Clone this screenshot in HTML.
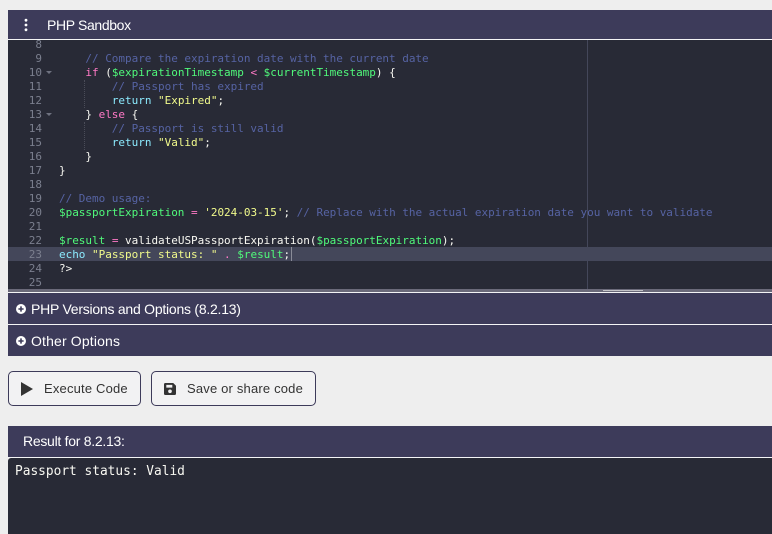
<!DOCTYPE html>
<html>
<head>
<meta charset="utf-8">
<style>
html,body{margin:0;padding:0;width:772px;height:534px;overflow:hidden;background:#eeeeee;font-family:"Liberation Sans",sans-serif}
.a{position:absolute}
.bar{position:absolute;left:8px;width:764px;background:#3d3b5a;color:#fff;font-size:14px;white-space:nowrap}
.line{position:absolute;left:8px;width:764px;height:1px;background:#f4f4f6}
#ed{position:absolute;left:8px;top:40px;width:764px;height:249px;background:#282a36;overflow:hidden}
.l{position:absolute;left:0;margin-top:1px;width:764px;height:14px;font:11px/14px "DejaVu Sans Mono",monospace;letter-spacing:-.022px;white-space:pre;color:#f8f8f2}
.n{position:absolute;right:730px;color:#7b7f8e;}
.c{position:absolute;left:51px}
.cm{color:#5663a3}
.k{color:#ff79c6}
.v{color:#50fa7b}
.s{color:#f1fa8c}
.f{color:#8be9fd}
.o{color:#ff79c6}
.btn{position:absolute;top:371px;height:33px;border:1px solid #3d3b5a;border-radius:5px;background:#f2f2f3;color:#333;font-size:13px;line-height:33px;white-space:nowrap;letter-spacing:.18px}
.fold{position:absolute;left:38px;width:0;height:0;border-left:3px solid transparent;border-right:3px solid transparent;border-top:3px solid #6f7280}
</style>
</head>
<body>
<div class="bar" style="top:10px;height:29px;line-height:30px">
  <svg class="a" style="left:16px;top:8px" width="4" height="14" viewBox="0 0 4 14"><circle cx="2" cy="2.2" r="1.4" fill="#fff"/><circle cx="2" cy="7" r="1.4" fill="#fff"/><circle cx="2" cy="11.8" r="1.4" fill="#fff"/></svg>
  <span class="a" style="left:39px;top:0;letter-spacing:-.36px">PHP Sandbox</span>
</div>
<div class="line" style="top:39px"></div>

<div id="ed">
  <div class="a" style="left:0;top:207px;width:764px;height:14px;background:#44475a"></div>
  <div class="a" style="left:579px;top:0;width:1px;height:249px;background:#44475a"></div>
  <div class="a" style="left:76px;top:40px;height:28px;border-left:1px dotted #4a4c58"></div>
  <div class="a" style="left:76px;top:82px;height:28px;border-left:1px dotted #4a4c58"></div>
  <div class="a" style="left:283px;top:207px;width:1px;height:14px;background:#8a8c98"></div>

  <div class="l" style="top:-3px"><span class="n">8</span></div>
  <div class="l" style="top:11px"><span class="n">9</span><span class="c cm">    // Compare the expiration date with the current date</span></div>
  <div class="l" style="top:25px"><span class="n">10</span><span class="c">    <span class="k">if</span> (<span class="v">$expirationTimestamp</span> <span class="o">&lt;</span> <span class="v">$currentTimestamp</span>) {</span></div>
  <div class="fold" style="top:31px"></div>
  <div class="l" style="top:39px"><span class="n">11</span><span class="c cm">        // Passport has expired</span></div>
  <div class="l" style="top:53px"><span class="n">12</span><span class="c">        <span class="f">return</span> <span class="s">"Expired"</span>;</span></div>
  <div class="l" style="top:67px"><span class="n">13</span><span class="c">    } <span class="k">else</span> {</span></div>
  <div class="fold" style="top:73px"></div>
  <div class="l" style="top:81px"><span class="n">14</span><span class="c cm">        // Passport is still valid</span></div>
  <div class="l" style="top:95px"><span class="n">15</span><span class="c">        <span class="f">return</span> <span class="s">"Valid"</span>;</span></div>
  <div class="l" style="top:109px"><span class="n">16</span><span class="c">    }</span></div>
  <div class="l" style="top:123px"><span class="n">17</span><span class="c">}</span></div>
  <div class="l" style="top:137px"><span class="n">18</span></div>
  <div class="l" style="top:151px"><span class="n">19</span><span class="c cm">// Demo usage:</span></div>
  <div class="l" style="top:165px"><span class="n">20</span><span class="c"><span class="v">$passportExpiration</span> <span class="o">=</span> <span class="s">'2024-03-15'</span>; <span class="cm">// Replace with the actual expiration date you want to validate</span></span></div>
  <div class="l" style="top:179px"><span class="n">21</span></div>
  <div class="l" style="top:193px"><span class="n">22</span><span class="c"><span class="v">$result</span> <span class="o">=</span> validateUSPassportExpiration(<span class="v">$passportExpiration</span>);</span></div>
  <div class="l" style="top:207px"><span class="n">23</span><span class="c"><span class="f">echo</span> <span class="s">"Passport status: "</span> <span class="o">.</span> <span class="v">$result</span>;</span></div>
  <div class="l" style="top:221px"><span class="n">24</span><span class="c">?&gt;</span></div>
  <div class="l" style="top:235px"><span class="n">25</span></div>
</div>

<div class="a" style="left:8px;top:289px;width:764px;height:3px;background:#6b6a7a"></div>
<div class="a" style="left:603px;top:290px;width:40px;height:1px;background:#c4c4c8"></div>
<div class="line" style="top:292px"></div>

<div class="bar" style="top:293px;height:31px;line-height:32px">
  <svg class="a" style="left:8px;top:11px" width="10" height="10" viewBox="0 0 10 10"><circle cx="5" cy="5" r="5" fill="#fff"/><path d="M5 2.4V7.6M2.4 5H7.6" stroke="#3d3b5a" stroke-width="1.6"/></svg>
  <span class="a" style="left:23px;top:0;letter-spacing:-.24px">PHP Versions and Options (8.2.13)</span>
</div>
<div class="line" style="top:324px"></div>
<div class="bar" style="top:325px;height:31px;line-height:32px">
  <svg class="a" style="left:8px;top:11px" width="10" height="10" viewBox="0 0 10 10"><circle cx="5" cy="5" r="5" fill="#fff"/><path d="M5 2.4V7.6M2.4 5H7.6" stroke="#3d3b5a" stroke-width="1.6"/></svg>
  <span class="a" style="left:23px;top:0;letter-spacing:.15px">Other Options</span>
</div>

<div class="btn" style="left:8px;width:131px">
  <svg class="a" style="left:12px;top:10px" width="12" height="14" viewBox="0 0 12 14"><path d="M0 0L12 7L0 14Z" fill="#333"/></svg>
  <span class="a" style="left:35px;top:0">Execute Code</span>
</div>
<div class="btn" style="left:151px;width:163px">
  <svg class="a" style="left:12px;top:11px" width="12" height="12" viewBox="0 0 13 13"><path fill-rule="evenodd" d="M1.5 0H10L13 3V11.5A1.5 1.5 0 0 1 11.5 13H1.5A1.5 1.5 0 0 1 0 11.5V1.5A1.5 1.5 0 0 1 1.5 0ZM2.5 2V5H9V2ZM6.5 7A2 2 0 1 0 6.5 11A2 2 0 1 0 6.5 7Z" fill="#333"/></svg>
  <span class="a" style="left:35px;top:0">Save or share code</span>
</div>

<div class="bar" style="top:426px;height:31px;line-height:31px">
  <span class="a" style="left:15px;top:0;letter-spacing:-.28px">Result for 8.2.13:</span>
</div>
<div class="line" style="top:457px"></div>
<div class="a" style="left:8px;top:458px;width:764px;height:76px;background:#282a36;border-top-left-radius:3px;color:#f8f8f2;font:12.84px/16px 'DejaVu Sans Mono',monospace;white-space:pre"><span class="a" style="left:7px;top:6px">Passport status: Valid</span></div>
</body>
</html>
